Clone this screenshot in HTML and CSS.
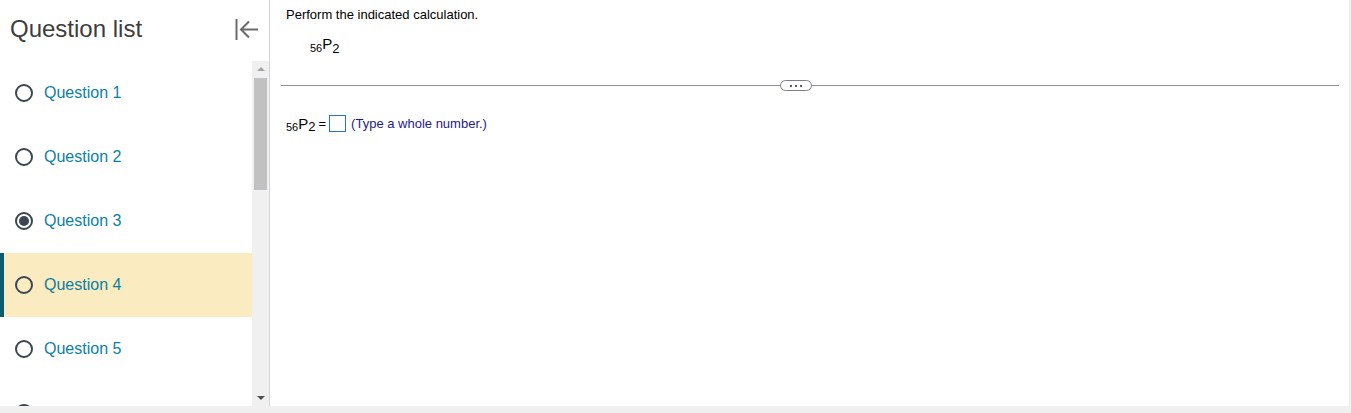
FILE: index.html
```html
<!DOCTYPE html>
<html>
<head>
<meta charset="utf-8">
<link rel="stylesheet" href="styles.css">
</head>
<body>
<div class="page">
  <aside class="sidebar">
    <div class="side-head">
      <h1 class="title">Question list</h1>
      <svg class="collapse" width="24" height="24" viewBox="0 0 24 24">
        <path d="M1.5 1v21" stroke="#6b6b6b" stroke-width="2" fill="none"/>
        <path d="M23 11.5H6M14 3.5l-8 8 8 8" stroke="#6b6b6b" stroke-width="2" fill="none"/>
      </svg>
    </div>
    <div class="side-body">
      <ul class="qlist">
        <li class="q"><span class="radio"></span><span class="qlabel">Question 1</span></li>
        <li class="q"><span class="radio"></span><span class="qlabel">Question 2</span></li>
        <li class="q"><span class="radio checked"></span><span class="qlabel">Question 3</span></li>
        <li class="q current"><span class="radio"></span><span class="qlabel">Question 4</span></li>
        <li class="q"><span class="radio"></span><span class="qlabel">Question 5</span></li>
        <li class="q"><span class="radio"></span><span class="qlabel">Question 6</span></li>
      </ul>
      <div class="scrollbar">
        <span class="arrow up"></span>
        <span class="thumb"></span>
        <span class="spacer"></span>
        <span class="arrow down"></span>
      </div>
    </div>
  </aside>
  <main class="main">
    <p class="prompt">Perform the indicated calculation.</p>
    <div class="expr"><span class="pre">56</span><span class="P">P</span><span class="sub">2</span></div>
    <div class="divider"><span class="pill"><i></i><i></i><i></i></span></div>
    <div class="answer">
      <span class="pre2">56</span><span class="P2">P</span><span class="sub2">2</span><span class="eq">=</span><span class="box"></span><span class="hint">(Type a whole number.)</span>
    </div>
  </main>
</div>
</body>
</html>
```
FILE: styles.css
```css
html, body {
  margin: 0;
  padding: 0;
  background: #f0f0f0;
  font-family: "Liberation Sans", Arial, sans-serif;
}
.page {
  display: flex;
  width: 1349px;
  height: 406px;
  background: #fff;
  overflow: hidden;
}
.sidebar {
  width: 269px;
  flex: none;
  border-right: 1px solid #d2d2e0;
  display: flex;
  flex-direction: column;
}
.side-head {
  height: 61px;
  flex: none;
  display: flex;
  align-items: flex-start;
  justify-content: space-between;
  padding: 0 10px 0 10px;
}
.title {
  margin: 15px 0 0 0;
  font-size: 24px;
  font-weight: normal;
  color: #3d3d3d;
}
.collapse {
  margin-top: 18px;
}
.side-body {
  flex: 1;
  display: flex;
  min-height: 0;
}
.qlist {
  list-style: none;
  margin: 0;
  padding: 0;
  width: 252px;
  flex: none;
  overflow: hidden;
}
.q {
  height: 64px;
  display: flex;
  align-items: center;
  padding-left: 15px;
  box-sizing: border-box;
}
.q.current {
  background: #faebc0;
  border-left: 4px solid #0e5a6e;
  padding-left: 11px;
}
.radio {
  width: 14px;
  height: 14px;
  border: 2px solid #3b4652;
  border-radius: 50%;
  flex: none;
  position: relative;
}
.radio.checked::after {
  content: "";
  position: absolute;
  left: 2px;
  top: 2px;
  width: 10px;
  height: 10px;
  border-radius: 50%;
  background: #3b4652;
}
.qlabel {
  margin-left: 11px;
  font-size: 16px;
  color: #0b7fa6;
}
.scrollbar {
  width: 17px;
  flex: none;
  background: #f0f0f0;
  display: flex;
  flex-direction: column;
  align-items: center;
}
.arrow {
  width: 0;
  height: 0;
  border-left: 4px solid transparent;
  border-right: 4px solid transparent;
  flex: none;
}
.arrow.up {
  border-bottom: 4px solid #a3a3a3;
  margin: 6px 0 7px;
}
.arrow.down {
  border-top: 4px solid #505050;
  margin: 6px 0 6px;
}
.thumb {
  width: 13px;
  height: 112px;
  background: #c1c1c1;
  flex: none;
}
.spacer { flex: 1; }
.main {
  flex: 1;
  padding: 0 10px 0 11px;
  color: #000;
  font-size: 13px;
}
.prompt {
  margin: 7px 0 0 5px;
  font-size: 13px;
}
.expr {
  margin: 14px 0 0 29px;
  height: 24px;
  line-height: 1;
}
.pre {
  font-size: 11px;
  position: relative;
  top: 3px;
}
.P {
  font-size: 15px;
}
.sub {
  font-size: 13px;
  position: relative;
  top: 4px;
}
.divider {
  margin-top: 25px;
  height: 1px;
  background: #8c9099;
  position: relative;
}
.pill {
  position: absolute;
  left: 499px;
  top: -5px;
  width: 30px;
  height: 9px;
  border: 1px solid #7b818b;
  border-radius: 6px;
  background: #fff;
  display: flex;
  align-items: center;
  justify-content: center;
  gap: 3px;
}
.pill i {
  width: 2px;
  height: 2px;
  background: #555c66;
  display: block;
}
.answer {
  margin: 28px 0 0 5px;
  display: flex;
  align-items: center;
  height: 18px;
}
.pre2 {
  font-size: 11px;
  position: relative;
  top: 4px;
}
.P2 {
  font-size: 15px;
}
.sub2 {
  font-size: 13px;
  position: relative;
  top: 3px;
}
.eq {
  font-size: 13px;
  margin-left: 3px;
  margin-right: 3px;
}
.box {
  width: 15px;
  height: 15px;
  border: 1px solid #2d6ed0;
  flex: none;
}
.hint {
  margin-left: 5px;
  color: #1c1c8a;
  font-size: 13px;
}
```
